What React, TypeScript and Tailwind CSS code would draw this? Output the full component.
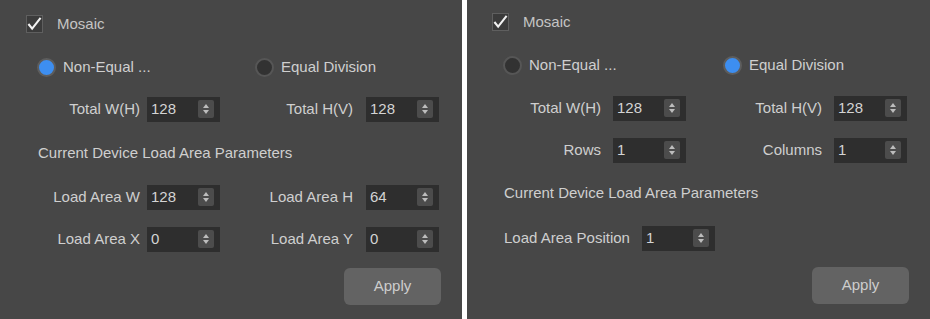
import React from 'react';

const font = { fontFamily: '"Liberation Sans", Arial, sans-serif' };

function CheckBox({ label }: { label: string }) {
  return (
    <div className="flex items-center">
      <div className="w-[17px] h-[18px] border border-[#5f5f5f] bg-[#3b3b3b] flex items-center justify-center">
        <svg width="16" height="16" viewBox="0 0 16 16">
          <polyline points="1.5,8 5.5,13 14.5,1.5" fill="none" stroke="#f2f2f2" strokeWidth="2.2" />
        </svg>
      </div>
      <span className="ml-[14px] text-[#c4c4c4]">{label}</span>
    </div>
  );
}

function Radio({ label, checked }: { label: string; checked?: boolean }) {
  return (
    <div className="flex items-center">
      <div
        className={
          checked
            ? 'w-[19px] h-[19px] rounded-full bg-[#3d8ef0] border-2 border-[#5d5d5d]'
            : 'w-[19px] h-[19px] rounded-full bg-[#323232] border-2 border-[#565656]'
        }
      />
      <span className="ml-[7px] text-[#cfcfcf]">{label}</span>
    </div>
  );
}

function SpinBox({ value }: { value: string }) {
  return (
    <div className="w-[73px] h-[25px] bg-[#2e2e2e] flex items-center justify-between pl-[4px] pr-[6px]">
      <span className="text-[#d4d4d4]">{value}</span>
      <div className="w-[16px] h-[18px] bg-[#4c4c4c] rounded-[2px] flex flex-col items-center justify-center gap-[2px]">
        <svg width="6" height="4" viewBox="0 0 6 4">
          <polygon points="3,0 6,4 0,4" fill="#bdbdbd" />
        </svg>
        <svg width="6" height="4" viewBox="0 0 6 4">
          <polygon points="0,0 6,0 3,4" fill="#bdbdbd" />
        </svg>
      </div>
    </div>
  );
}

function ApplyButton() {
  return (
    <div className="w-[97px] h-[37px] rounded-[6px] bg-[#636363] flex items-center justify-center text-[#cdcdcd]">
      Apply
    </div>
  );
}

export default function App() {
  return (
    <div className="w-[930px] h-[319px] flex bg-white text-[15px]" style={font}>
      {/* Non-Equal panel */}
      <div className="w-[462px] h-full bg-[#474747] pt-[3px] text-[#cfcfcf]">
        <div className="h-[42px] flex items-center pl-[26px]">
          <CheckBox label="Mosaic" />
        </div>
        <div className="h-[44px] flex items-center pl-[37px]">
          <div className="w-[218px]">
            <Radio label="Non-Equal ..." checked />
          </div>
          <Radio label="Equal Division" />
        </div>
        <div className="h-[40px] flex items-center">
          <div className="w-[140px] text-right">Total W(H)</div>
          <div className="ml-[7px]"><SpinBox value="128" /></div>
          <div className="w-[133px] text-right">Total H(V)</div>
          <div className="ml-[13px]"><SpinBox value="128" /></div>
        </div>
        <div className="h-[48px] flex items-center pl-[38px]">
          Current Device Load Area Parameters
        </div>
        <div className="h-[40px] flex items-center">
          <div className="w-[140px] text-right">Load Area W</div>
          <div className="ml-[7px]"><SpinBox value="128" /></div>
          <div className="w-[133px] text-right">Load Area H</div>
          <div className="ml-[13px]"><SpinBox value="64" /></div>
        </div>
        <div className="h-[44px] flex items-center">
          <div className="w-[140px] text-right">Load Area X</div>
          <div className="ml-[7px]"><SpinBox value="0" /></div>
          <div className="w-[133px] text-right">Load Area Y</div>
          <div className="ml-[13px]"><SpinBox value="0" /></div>
        </div>
        <div className="mt-[7px] pl-[344px]">
          <ApplyButton />
        </div>
      </div>

      <div className="w-[5px]" />

      {/* Equal Division panel */}
      <div className="w-[463px] h-full bg-[#474747] pt-[1px] text-[#cfcfcf]">
        <div className="h-[42px] flex items-center pl-[25px]">
          <CheckBox label="Mosaic" />
        </div>
        <div className="h-[44px] flex items-center pl-[36px]">
          <div className="w-[220px]">
            <Radio label="Non-Equal ..." />
          </div>
          <Radio label="Equal Division" checked />
        </div>
        <div className="h-[42px] flex items-center">
          <div className="w-[134px] text-right">Total W(H)</div>
          <div className="ml-[12px]"><SpinBox value="128" /></div>
          <div className="w-[136px] text-right">Total H(V)</div>
          <div className="ml-[12px]"><SpinBox value="128" /></div>
        </div>
        <div className="h-[42px] flex items-center">
          <div className="w-[134px] text-right">Rows</div>
          <div className="ml-[12px]"><SpinBox value="1" /></div>
          <div className="w-[136px] text-right">Columns</div>
          <div className="ml-[12px]"><SpinBox value="1" /></div>
        </div>
        <div className="h-[44px] flex items-center pl-[37px]">
          Current Device Load Area Parameters
        </div>
        <div className="h-[46px] flex items-center pl-[37px]">
          <div className="w-[138px]">Load Area Position</div>
          <SpinBox value="1" />
        </div>
        <div className="mt-[6px] pl-[345px]">
          <ApplyButton />
        </div>
      </div>
    </div>
  );
}
